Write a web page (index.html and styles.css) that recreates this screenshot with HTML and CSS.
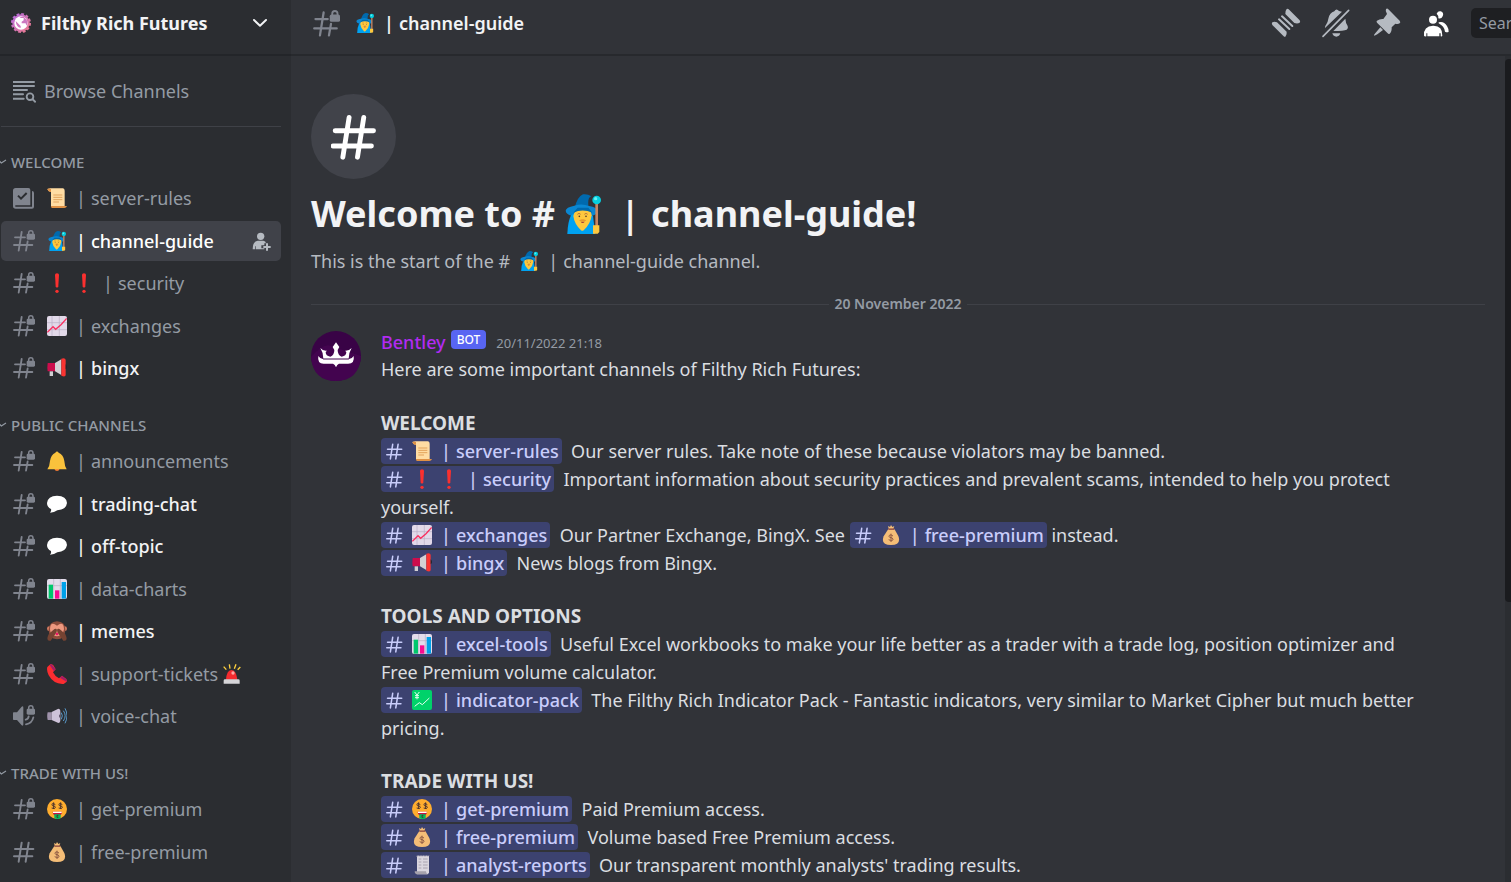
FILE: index.html
```html
<!DOCTYPE html>
<html lang="en">
<head>
<meta charset="utf-8">
<title>Filthy Rich Futures - channel-guide</title>
<meta name="viewport" content="width=device-width, initial-scale=1">
<link rel="stylesheet" href="styles.css">
</head>
<body>
<svg class="sprite" aria-hidden="true">
  <symbol id="hash" viewBox="0 0 66 66"><path d="M26 5 17 62M47 5 38 62M6 24h55M3 46h55" fill="none" stroke="currentColor" stroke-linecap="round"/></symbol>
  <symbol id="hash-lock" viewBox="0 0 66 66"><path d="M26 6 17 62M44 34 39 62M6 22h30M3 45h55" fill="none" stroke="currentColor" stroke-width="5.5" stroke-linecap="round"/><rect x="41" y="11" width="25" height="18" rx="4" fill="currentColor"/><path d="M47 13V9a6 6 0 0 1 13 0v4" fill="none" stroke="currentColor" stroke-width="4.5"/></symbol>
  <symbol id="voice-lock" viewBox="0 0 66 66"><path d="M2 22h10L26 5q5-3 5 3v50q0 6-5 3L12 45H2q-2 0-2-3V25q0-3 2-3Z" fill="currentColor"/><path d="M38 44q8-2 9-10M39 58q18-3 22-21" fill="none" stroke="currentColor" stroke-width="5.5" stroke-linecap="round"/><rect x="41" y="11" width="25" height="18" rx="4" fill="currentColor"/><path d="M47 13V9a6 6 0 0 1 13 0v4" fill="none" stroke="currentColor" stroke-width="4.5"/></symbol>
  <symbol id="rules" viewBox="0 0 66 66"><path d="M8 3h38q6 0 6 6v46H9q-3 0-3 2t3 2h48V12q6 0 6 6v41q0 6-6 6H8q-8 0-8-8V11q0-8 8-8Z" fill="currentColor"/><path d="m15 26 9 9 17-17" fill="none" stroke="#2b2d31" stroke-width="6"/></symbol>
  <symbol id="browse" viewBox="0 -3 69 69"><path d="M1 3h62M1 15h62M1 27h41M1 40h29M1 53h31" stroke="currentColor" stroke-width="6" stroke-linecap="round"/><circle cx="51" cy="47" r="10" fill="none" stroke="currentColor" stroke-width="5.5"/><path d="m58 54 10 10" stroke="currentColor" stroke-width="5.5"/></symbol>
  <symbol id="chevron" viewBox="0 0 48 30"><path d="m6 6 18 17L42 6" fill="none" stroke="currentColor" stroke-width="6" stroke-linecap="round" stroke-linejoin="round"/></symbol>
  <symbol id="tick" viewBox="0 0 21 18"><path d="m-5 3 9 9L18 3" fill="none" stroke="currentColor" stroke-width="3.5"/></symbol>
  <symbol id="add-member" viewBox="0 0 57 57"><circle cx="26" cy="13" r="11" fill="currentColor"/><path d="M2 52Q2 28 17 26h17q7 1 8 8h-5v6h-9v9h9v3H12v-9h-2v9Z" fill="currentColor"/><path d="M45 34v22M34 45h22" stroke="currentColor" stroke-width="6"/></symbol>
  <symbol id="server-badge" viewBox="0 0 60 60"><defs><linearGradient id="badge-fill" x1="0" y1="0" x2="1" y2="1"><stop offset="0" stop-color="#b46ce0"/><stop offset="1" stop-color="#ee7b8b"/></linearGradient></defs><circle cx="30" cy="30" r="26" fill="url(#badge-fill)"/><circle cx="30" cy="30" r="26" fill="none" stroke="url(#badge-fill)" stroke-width="8" stroke-dasharray="8 5.6"/><circle cx="30" cy="30" r="20" fill="#fff"/><path d="M14 24 29 39v6q-13-3-15-21Zm12-9h12v7l-6 4v5h12l2 7q6-9 1-18l-9-8q-7-2-12 3Z" fill="#cc78c0"/></symbol>

  <symbol id="threads" viewBox="0 0 90 90"><path d="M47 3q4-2 6 1l33 33q3 4 0 7-6 4-16 1L43 18q-1-9 4-15Z" fill="currentColor"/><path d="m33 25 31 29M24 34l31 29" stroke="currentColor" stroke-width="6" stroke-linecap="round"/><path d="M4 43q6-3 14 0l29 28q1 9-3 14-3 3-6 0L4 51q-3-4 0-8Z" fill="currentColor"/></symbol>
  <symbol id="bell-off" viewBox="0 0 90 90"><path d="M12 60q-1-4 4-11 4-5 6-17 4-18 18-22 6-11 14-1l9 2Z" fill="currentColor"/><path d="M73 32q1 14 7 22 3 7-3 11-8 4-40 4Z" fill="currentColor"/><path d="M34 76h24q-3 10-12 10t-12-10Z" fill="currentColor"/><path d="M6 85 83 7" stroke="currentColor" stroke-width="5" stroke-linecap="round"/></symbol>
  <symbol id="pin" viewBox="-5 0 90 90"><path d="M40 3q4-3 7 1l34 34q4 5 0 8-5 4-13 1L57 58q1 13-6 19-3 2-6-1L13 44q-3-4 0-6 8-6 19-5L43 18q-6-9-3-15ZM23 58l8 8L14 79q-6 4-10 4-1-3 5-9Z" fill="currentColor"/></symbol>
  <symbol id="members" viewBox="-5 -2 90 90"><circle cx="31" cy="33" r="12" fill="currentColor"/><path d="M4 81Q2 52 31 51t28 30q-1 3-5 2v-9h-4v9H14v-9h-3v9q-6 1-7-2Z" fill="currentColor"/><path d="M42 15q4-9 12-7 11 4 6 15-4 9-13 6 1-9-5-14ZM48 41q15-5 25 11 6 10 5 17-4 3-11 0Q65 53 48 44Z" fill="currentColor"/></symbol>

  <symbol id="wizard" viewBox="0 0 120 120"><path d="M35 42Q43 8 60 1q14-2 25 6-13 3-8 35Z" fill="#006aae"/><path d="M34 35q22-8 44 1 24 3 24 16 0 10-14 13H26Q9 61 8 50q1-10 26-15Z" fill="#0a87d2"/><path d="m24 64 32-18 34 20 7 54H13q1-35 11-56Z" fill="#00a2f1"/><path d="M59 43q27 1 27 21-3 26-24 45-4 3-8 0-20-19-23-43 3-20 28-23Z" fill="#fec83e"/><path d="M31 56q28-13 57 0L76 41H44Z" fill="#0069ac"/><path d="M43 61q5-6 10 0m11 0q5-6 10 0" fill="none" stroke="#bc7838" stroke-width="3"/><circle cx="49" cy="67" r="2.5" fill="#4b3429"/><circle cx="69" cy="67" r="2.5" fill="#4b3429"/><path d="M48 80q5-6 11-4 6-2 11 4-5 2-11 2t-11-2Z" fill="#e89a2f"/><path d="M53 83h12q-2 4-6 4t-6-4Z" fill="#a63c38"/><path d="M97 30h8v70h-8Z" fill="#c98662"/><circle cx="101" cy="18" r="13" fill="#05cfdf"/><circle cx="98" cy="14" r="5" fill="#64f0f4"/><path d="M90 94h19v20l-5 5H90Z" fill="#fec83e"/></symbol>
  <symbol id="scroll" viewBox="0 0 60 60"><path d="M10 1h38q5 1 5 7v46H12V12Q3 11 1 3Z" fill="#ffdca3"/><path d="M1 3q4-3 11 0v9Q4 12 1 3ZM12 54h48q-2 6-8 6H15q-4-2-3-6Z" fill="#df9145"/><path d="M19 21h27M19 28h27M19 35h27M19 42h17" stroke="#dc974d" stroke-width="2.5"/></symbol>
  <symbol id="exclaim" viewBox="0 0 60 60"><path d="M24 6q0-5 6-5t6 5l-2 34q-1 4-4 4t-4-4Z" fill="#fa302f"/><circle cx="30" cy="55" r="5" fill="#fa302f"/></symbol>
  <symbol id="growth" viewBox="0 0 60 60"><rect width="60" height="60" rx="6" fill="#e2d9e9"/><path d="M15 0v60M37 0v60M0 20h60M0 41h60" stroke="#baafc5" stroke-width="2"/><path d="m1 49 17-17 8 8 16-14L59 7" fill="none" stroke="#f92f60" stroke-width="4"/></symbol>
  <symbol id="megaphone" viewBox="0 0 60 60"><path d="M2 15h22v25H2q-2-8 0-25Z" fill="#cc0d4c"/><path d="M24 15 43 4v47L24 40Z" fill="#d3d0d4"/><path d="M43 2q12-4 13 4v46q-2 6-13 1Z" fill="#fa3432"/><path d="M56 19q8 8 0 15Z" fill="#25252a"/><path d="M8 40h10v14H8Z" fill="#d1cfd3"/></symbol>
  <symbol id="bell" viewBox="0 0 60 60"><path d="M22 53h16q-2 7-8 7t-8-7Z" fill="#f47a35"/><path d="M25 5q5-7 10 0 14 5 17 25 1 16 7 25H1q7-9 8-25Q12 10 25 5Z" fill="#fac23c"/></symbol>
  <symbol id="speech" viewBox="0 0 60 60"><path d="M30 5q29 1 30 22-3 20-29 22-9 7-22 7 5-5 3-11Q0 39 0 27 2 6 30 5Z" fill="#fff"/></symbol>
  <symbol id="bars" viewBox="0 0 60 60"><rect width="60" height="60" rx="6" fill="#e3dceb"/><path d="M20 0v60M40 0v60M0 20h60" stroke="#b8adc3" stroke-width="2"/><path d="M5 17h13v42H5Z" fill="#00c76c"/><path d="M24 34h13v25H24Z" fill="#fa0b91"/><path d="M44 9h13v50H44Z" fill="#00a1e9"/></symbol>
  <symbol id="monkey" viewBox="0 0 60 60"><circle cx="7" cy="23" r="7" fill="#d67c62"/><circle cx="53" cy="23" r="7" fill="#d67c62"/><path d="M30 1q25 1 25 25-1 28-25 29Q5 53 5 26 6 2 30 1Z" fill="#8d4c3b"/><path d="M30 14q20-15 21 11-3 20-21 21Q10 46 9 25 10-1 30 14Z" fill="#ee987f"/><path d="M5 40Q21 22 27 23q5 2 1 12L11 59Q-5 62 5 40ZM55 40Q39 22 33 23q-5 2-1 12l17 24q16 3 6-19Z" fill="#754332"/><circle cx="30" cy="39" r="4" fill="#ed1769"/></symbol>
  <symbol id="phone" viewBox="0 0 60 60"><path d="m1 9 9-8q5-2 9 3l7 12-8 9q5 11 18 18l9-8 12 9q4 4 2 9l-9 7Q20 61 5 34-2 20 1 9Z" fill="#fb2d30"/><path d="m8 3 5-3 13 16-6 5ZM39 41l6-6 14 12v6Z" fill="#a41d67"/></symbol>
  <symbol id="siren" viewBox="0 0 60 60"><path d="m8 8 8 9M25 1l2 13M45 1l-5 13M58 9l-8 8" stroke="#ffd13c" stroke-width="4"/><path d="M15 47q2-28 16-29 15 0 18 29Z" fill="#f52b2f"/><circle cx="36" cy="27" r="5" fill="#ffa4a1"/><path d="M8 50q0-4 4-4h40q4 0 4 4v9H8Z" fill="#d6d5d8"/></symbol>
  <symbol id="speaker" viewBox="0 0 60 60"><path d="M2 19h12v23H2q-3-12 0-23Z" fill="#9f92ab"/><path d="M14 18 34 8q5 0 6 6v31q-1 6-6 6L14 42Z" fill="#cec3da"/><path d="M36 25q7 5 0 11Z" fill="#665a72"/><path d="M43 20q6 9 0 20m6-26q11 15 0 31m5-38q12 22 0 45" fill="none" stroke="#62aee7" stroke-width="2.5"/></symbol>
  <symbol id="money-face" viewBox="0 0 60 60"><circle cx="30" cy="30" r="30" fill="#ffad2e"/><path d="M17 38h28q-1 13-14 13T17 38Z" fill="#c61546"/><path d="M18 38h26v4H18Z" fill="#fff"/><path d="M22 46h19v11q-9 7-19 0Z" fill="#00b95c"/><path d="M25 17q-10-7-10 0 0 4 5 4t5 5q0 5-11 1M20 10v20M46 17q-10-7-10 0 0 4 5 4t5 5q0 5-11 1M41 10v20M34 49h-4v6h4" fill="none" stroke="#4c342e" stroke-width="3"/></symbol>
  <symbol id="money-bag" viewBox="0 0 60 60"><path d="m21 3 6 3 3-6 4 6 6-3-4 11H24Z" fill="#f5bf78"/><path d="M22 12h18l12 21q10 27-22 27T8 34Z" fill="#f4bd77"/><path d="M22 10h18v5H22Z" fill="#9e5d4a"/><path d="M36 33q-11-7-12 1 1 4 6 4t6 5q-1 7-13 1M30 26v25" fill="none" stroke="#8d5843" stroke-width="3"/></symbol>
  <symbol id="yen-chart" viewBox="0 0 60 60"><rect width="60" height="60" rx="6" fill="#00d26a"/><path d="m8 6 7 9 7-9M15 15v13M9 17h12M9 23h12M8 49l14-11 9 6 21-20" fill="none" stroke="#e4fff2" stroke-width="3"/></symbol>
  <symbol id="receipt" viewBox="0 0 60 60"><path d="M15 2h36v50q-1 6-6 6H15Z" fill="#dad6df"/><path d="M15 2v4l4-4 4 4 4-4 4 4 4-4 4 4 4-4 4 4 4-4" fill="none" stroke="#b9b3c0" stroke-width="2"/><path d="M20 12h8m5 0h14M20 21h8m5 0h14M20 30h8m5 0h14M20 39h8m5 0h14" stroke="#928b9c" stroke-width="2"/><path d="M8 49h34q1 10 9 9H13q-6-3-5-9Z" fill="#a5a1ac"/></symbol>
  <symbol id="crown" viewBox="0 0 150 150"><circle cx="75" cy="75" r="75" fill="#390346"/><path d="M0 78q40-45 60-33l90 30q-6 75-75 75T0 78Z" fill="#43044f"/><path d="m75 34 10 14-5 9q0 16 12 20 14-2 14-14l-4-4q12 1 20-8-9 14-9 32H37Q37 65 28 51q9 10 20 8l-4 4q0 12 14 14 12-4 12-20l-5-9Z" fill="#fff"/><path d="M22 75q5 9 16 10h74q11-1 16-10 4 25-20 23H84q-6 2-9 11-3-9-9-11H41Q18 100 22 75Z" fill="#fff"/><path d="M36 84h78" stroke="#43044f" stroke-width="2"/></symbol>
</svg>

<div class="app">
  <nav class="sidebar" aria-label="Channels">
    <button class="server" type="button">
      <svg class="server-logo"><use href="#server-badge"/></svg>
      <span class="server-name">Filthy Rich Futures</span>
      <svg class="server-chevron"><use href="#chevron"/></svg>
    </button>
    <a class="browse" href="#"><svg class="browse-icon"><use href="#browse"/></svg>Browse Channels</a>

    <section class="group">
      <button class="category" type="button"><svg class="tick"><use href="#tick"/></svg>WELCOME</button>
      <div class="channels">
        <a class="channel" href="#"><svg class="kind"><use href="#rules"/></svg><svg class="emoji"><use href="#scroll"/></svg><span class="bar">|</span>server-rules</a>
        <a class="channel selected" href="#"><svg class="kind"><use href="#hash-lock"/></svg><svg class="emoji"><use href="#wizard"/></svg><span class="bar">|</span>channel-guide<svg class="add"><use href="#add-member"/></svg></a>
        <a class="channel" href="#"><svg class="kind"><use href="#hash-lock"/></svg><svg class="emoji"><use href="#exclaim"/></svg><svg class="emoji second"><use href="#exclaim"/></svg><span class="bar">|</span>security</a>
        <a class="channel" href="#"><svg class="kind"><use href="#hash-lock"/></svg><svg class="emoji"><use href="#growth"/></svg><span class="bar">|</span>exchanges</a>
        <a class="channel unread" href="#"><svg class="kind"><use href="#hash-lock"/></svg><svg class="emoji"><use href="#megaphone"/></svg><span class="bar">|</span>bingx</a>
      </div>
    </section>

    <section class="group">
      <button class="category" type="button"><svg class="tick"><use href="#tick"/></svg>PUBLIC CHANNELS</button>
      <div class="channels">
        <a class="channel" href="#"><svg class="kind"><use href="#hash-lock"/></svg><svg class="emoji"><use href="#bell"/></svg><span class="bar">|</span>announcements</a>
        <a class="channel unread" href="#"><svg class="kind"><use href="#hash-lock"/></svg><svg class="emoji"><use href="#speech"/></svg><span class="bar">|</span>trading-chat</a>
        <a class="channel unread" href="#"><svg class="kind"><use href="#hash-lock"/></svg><svg class="emoji"><use href="#speech"/></svg><span class="bar">|</span>off-topic</a>
        <a class="channel" href="#"><svg class="kind"><use href="#hash-lock"/></svg><svg class="emoji"><use href="#bars"/></svg><span class="bar">|</span>data-charts</a>
        <a class="channel unread" href="#"><svg class="kind"><use href="#hash-lock"/></svg><svg class="emoji"><use href="#monkey"/></svg><span class="bar">|</span>memes</a>
        <a class="channel" href="#"><svg class="kind"><use href="#hash-lock"/></svg><svg class="emoji"><use href="#phone"/></svg><span class="bar">|</span>support-tickets<svg class="emoji trailing"><use href="#siren"/></svg></a>
        <a class="channel" href="#"><svg class="kind"><use href="#voice-lock"/></svg><svg class="emoji"><use href="#speaker"/></svg><span class="bar">|</span>voice-chat</a>
      </div>
    </section>

    <section class="group">
      <button class="category" type="button"><svg class="tick"><use href="#tick"/></svg>TRADE WITH US!</button>
      <div class="channels">
        <a class="channel" href="#"><svg class="kind"><use href="#hash-lock"/></svg><svg class="emoji"><use href="#money-face"/></svg><span class="bar">|</span>get-premium</a>
        <a class="channel" href="#"><svg class="kind"><use href="#hash"/></svg><svg class="emoji"><use href="#money-bag"/></svg><span class="bar">|</span>free-premium</a>
      </div>
    </section>
  </nav>

  <main class="chat">
    <header class="topbar">
      <svg class="topbar-hash"><use href="#hash-lock"/></svg>
      <h2 class="topbar-title"><svg class="emoji"><use href="#wizard"/></svg><span class="bar">|</span>channel-guide</h2>
      <div class="tools">
        <button class="tool" type="button" aria-label="Threads"><svg><use href="#threads"/></svg></button>
        <button class="tool" type="button" aria-label="Notification settings"><svg><use href="#bell-off"/></svg></button>
        <button class="tool" type="button" aria-label="Pinned messages"><svg><use href="#pin"/></svg></button>
        <button class="tool active" type="button" aria-label="Member list"><svg><use href="#members"/></svg></button>
        <input class="search" type="text" placeholder="Search" aria-label="Search">
      </div>
    </header>

    <div class="scroller">
      <div class="content">
        <div class="hero-icon"><svg><use href="#hash"/></svg></div>
        <h1 class="hero-title">Welcome to #<svg class="emoji"><use href="#wizard"/></svg><span class="bar">|</span>channel-guide!</h1>
        <p class="hero-text">This is the start of the #<svg class="emoji"><use href="#wizard"/></svg><span class="bar">|</span>channel-guide channel.</p>
        <div class="date"><span>20 November 2022</span></div>

        <article class="message">
          <svg class="avatar"><use href="#crown"/></svg>
          <div class="body">
            <div class="meta"><span class="author">Bentley</span><span class="bot">BOT</span><time class="time">20/11/2022 21:18</time></div>
            <p>Here are some important channels of Filthy Rich Futures:</p>
            <div class="block">
              <strong>WELCOME</strong>
              <p><a class="mention" href="#"><svg class="hash"><use href="#hash"/></svg><svg class="emoji"><use href="#scroll"/></svg><span class="bar">|</span>server-rules</a>&nbsp; Our server rules. Take note of these because violators may be banned.</p>
              <p><a class="mention" href="#"><svg class="hash"><use href="#hash"/></svg><svg class="emoji"><use href="#exclaim"/></svg><svg class="emoji second"><use href="#exclaim"/></svg><span class="bar">|</span>security</a>&nbsp; Important information about security practices and prevalent scams, intended to help you protect yourself.</p>
              <p><a class="mention" href="#"><svg class="hash"><use href="#hash"/></svg><svg class="emoji"><use href="#growth"/></svg><span class="bar">|</span>exchanges</a>&nbsp; Our Partner Exchange, BingX. See <a class="mention" href="#"><svg class="hash"><use href="#hash"/></svg><svg class="emoji"><use href="#money-bag"/></svg><span class="bar">|</span>free-premium</a> instead.</p>
              <p><a class="mention" href="#"><svg class="hash"><use href="#hash"/></svg><svg class="emoji"><use href="#megaphone"/></svg><span class="bar">|</span>bingx</a>&nbsp; News blogs from Bingx.</p>
            </div>
            <div class="block">
              <strong>TOOLS AND OPTIONS</strong>
              <p><a class="mention" href="#"><svg class="hash"><use href="#hash"/></svg><svg class="emoji"><use href="#bars"/></svg><span class="bar">|</span>excel-tools</a>&nbsp; Useful Excel workbooks to make your life better as a trader with a trade log, position optimizer and Free Premium volume calculator.</p>
              <p><a class="mention" href="#"><svg class="hash"><use href="#hash"/></svg><svg class="emoji"><use href="#yen-chart"/></svg><span class="bar">|</span>indicator-pack</a>&nbsp; The Filthy Rich Indicator Pack - Fantastic indicators, very similar to Market Cipher but much better pricing.</p>
            </div>
            <div class="block">
              <strong>TRADE WITH US!</strong>
              <p><a class="mention" href="#"><svg class="hash"><use href="#hash"/></svg><svg class="emoji"><use href="#money-face"/></svg><span class="bar">|</span>get-premium</a>&nbsp; Paid Premium access.</p>
              <p><a class="mention" href="#"><svg class="hash"><use href="#hash"/></svg><svg class="emoji"><use href="#money-bag"/></svg><span class="bar">|</span>free-premium</a>&nbsp; Volume based Free Premium access.</p>
              <p><a class="mention" href="#"><svg class="hash"><use href="#hash"/></svg><svg class="emoji"><use href="#receipt"/></svg><span class="bar">|</span>analyst-reports</a>&nbsp; Our transparent monthly analysts' trading results.</p>
            </div>
          </div>
        </article>
      </div>
      <div class="track"><div class="thumb"></div></div>
    </div>
  </main>
</div>
</body>
</html>
```
FILE: styles.css
```css
* { box-sizing: border-box; }

body {
  margin: 0;
  background: #313338;
  color: #dbdee1;
  font: 18px/28px "Noto Sans", "Open Sans", sans-serif;
}

h1, h2, p { margin: 0; }
a { color: inherit; text-decoration: none; }
svg { display: block; flex: none; stroke-width: 6; }
.sprite { position: absolute; width: 0; height: 0; }

button {
  border: 0;
  padding: 0;
  background: none;
  color: inherit;
  font: inherit;
  text-align: left;
}

.app {
  display: flex;
  height: 100vh;
  overflow: hidden;
}

.emoji { width: 20px; height: 20px; }
.emoji.second { margin-left: 7px; }
.bar {
  flex: none;
  width: 24px;
  padding-left: 4px;
  text-align: center;
}

/* Sidebar */
.sidebar {
  flex: none;
  width: 291px;
  overflow: hidden;
  background: #2b2d31;
  color: #949ba4;
}

.server {
  display: flex;
  align-items: center;
  width: 100%;
  height: 56px;
  padding: 0 23px 8px 11px;
  border-bottom: 2px solid #232529;
  color: #f2f3f5;
  font-weight: 700;
}
.server-logo { width: 20px; height: 20px; }
.server-name { flex: 1; margin-left: 10px; }
.server-chevron { width: 16px; height: 10px; }

.browse {
  display: flex;
  align-items: center;
  gap: 8px;
  height: 71px;
  margin: 0 10px 0 1px;
  padding-left: 12px;
  border-bottom: 1px solid #3f4147;
}
.browse-icon { width: 23px; height: 23px; }

.group { margin-top: 25px; }
.group + .group { margin-top: 27px; }
.category {
  display: flex;
  align-items: center;
  gap: 4px;
  height: 20px;
  margin-bottom: 6px;
  font-size: 15px;
  font-weight: 500;
}
.tick { width: 7px; height: 6px; }

.channels { display: flex; flex-direction: column; }
.channel {
  display: flex;
  align-items: center;
  height: 40px;
  margin: 0 10px 2px 1px;
  padding: 0 10px 0 12px;
  border-radius: 5px;
}
.channel:nth-child(odd) { margin-bottom: 3px; }
.channel:last-child { margin-bottom: 0; }
.kind {
  width: 22px;
  height: 22px;
  margin-right: 12px;
  color: #80848e;
}
.channel.unread { color: #f2f3f5; font-weight: 500; }
.channel.selected { background: #404249; color: #fff; font-weight: 500; }
.add { width: 19px; height: 19px; margin-left: auto; color: #b5bac1; }
.trailing { margin-left: 3px; }

/* Channel view */
.chat {
  display: flex;
  flex: 1;
  flex-direction: column;
  min-width: 0;
}

.topbar {
  display: flex;
  flex: none;
  align-items: center;
  height: 56px;
  padding: 0 0 8px 22px;
  border-bottom: 2px solid #27292d;
  overflow: hidden;
}
.topbar-hash { width: 27px; height: 27px; margin-right: 15px; color: #80848e; }
.topbar-title {
  display: flex;
  align-items: center;
  color: #f2f3f5;
  font-size: 18px;
  font-weight: 600;
}
.tools {
  display: flex;
  align-items: center;
  gap: 20px;
  margin: 0 -140px 0 auto;
}
.tool { color: #b5bac1; }
.tool.active { color: #fff; }
.tool svg { width: 30px; height: 30px; }
.search {
  width: 180px;
  height: 30px;
  padding: 0 8px;
  border: 0;
  border-radius: 5px;
  background: #1e1f22;
  color: #dbdee1;
  font: 16px "Noto Sans", sans-serif;
}
.search::placeholder { color: #949ba4; opacity: 1; }

.scroller {
  display: flex;
  flex: 1;
  min-height: 0;
  overflow: hidden;
}
.content { flex: 1; min-width: 0; padding: 38px 20px 0; }
.track { width: 6px; padding-top: 3px; background: #2b2d31; }
.thumb { height: 66%; border-radius: 4px 0 0 4px; background: #1a1b1e; }

.hero-icon {
  display: flex;
  align-items: center;
  justify-content: center;
  width: 85px;
  height: 85px;
  border-radius: 50%;
  background: #41434a;
  color: #fff;
}
.hero-icon svg { width: 46px; height: 46px; stroke-width: 7; }
.hero-title {
  display: flex;
  align-items: center;
  height: 50px;
  margin-top: 10px;
  color: #f2f3f5;
  font-size: 36px;
  font-weight: 700;
}
.hero-title .emoji { width: 40px; height: 40px; margin-left: 8px; }
.hero-title .bar { width: 48px; padding-left: 6px; font-weight: 600; }
.hero-text {
  display: flex;
  align-items: center;
  margin-top: 8px;
  color: #b5bac1;
}
.hero-text .emoji { margin-left: 9px; }

.date {
  display: flex;
  align-items: center;
  height: 20px;
  margin-top: 19px;
  color: #949ba4;
  font-size: 14px;
  font-weight: 600;
}
.date::before, .date::after {
  content: "";
  flex: 1;
  border-top: 1px solid #3f4147;
}
.date span { padding: 0 5px; }

.message {
  display: flex;
  gap: 20px;
  margin-top: 14px;
  padding-right: 50px;
}
.avatar { width: 50px; height: 50px; margin-top: 3px; }
.body { flex: 1; min-width: 0; }
.meta { display: flex; align-items: center; height: 27px; }
.author { color: #b12bf2; font-weight: 500; }
.bot {
  margin: 0 10px 4px 5px;
  padding: 0 6px;
  border-radius: 4px;
  background: #5865f2;
  color: #fff;
  font-size: 12px;
  font-weight: 500;
  line-height: 19px;
}
.time { margin-top: 2px; color: #949ba4; font-size: 13px; }
.body > p { margin-bottom: 26px; }
.block { margin-bottom: 25px; }
.block strong { display: block; font-size: 19px; font-weight: 700; }

.mention {
  display: inline-flex;
  align-items: center;
  height: 26px;
  margin-top: 1px;
  padding: 0 3px 0 5px;
  border-radius: 4px;
  background: #3c4270;
  color: #c9cdfb;
  font-weight: 500;
  line-height: 26px;
  vertical-align: top;
}
.mention .hash { width: 17px; height: 17px; margin-right: 9px; }
```
